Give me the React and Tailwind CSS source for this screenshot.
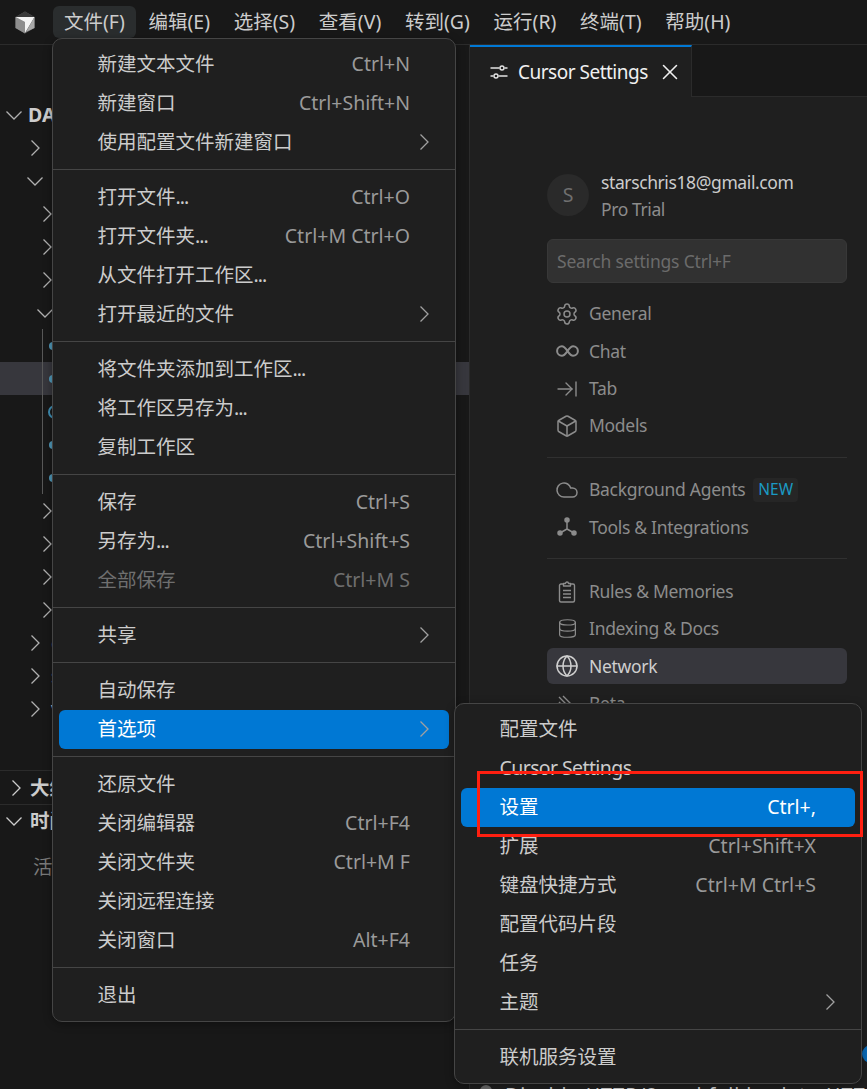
import React from "react";
import { Settings, ArrowRightToLine, Box, Cloud, Database, Globe, X } from "lucide-react";

const menuBar = ["文件(F)", "编辑(E)", "选择(S)", "查看(V)", "转到(G)", "运行(R)", "终端(T)", "帮助(H)"];

const fileMenu = [
    { label: "新建文本文件", keys: "Ctrl+N" },
    { label: "新建窗口", keys: "Ctrl+Shift+N" },
    { label: "使用配置文件新建窗口", more: true },
    { sep: true },
    { label: "打开文件...", keys: "Ctrl+O" },
    { label: "打开文件夹...", keys: "Ctrl+M Ctrl+O" },
    { label: "从文件打开工作区..." },
    { label: "打开最近的文件", more: true },
    { sep: true },
    { label: "将文件夹添加到工作区..." },
    { label: "将工作区另存为..." },
    { label: "复制工作区" },
    { sep: true },
    { label: "保存", keys: "Ctrl+S" },
    { label: "另存为...", keys: "Ctrl+Shift+S" },
    { label: "全部保存", keys: "Ctrl+M S", disabled: true },
    { sep: true },
    { label: "共享", more: true },
    { sep: true },
    { label: "自动保存" },
    { label: "首选项", more: true, active: true },
    { sep: true },
    { label: "还原文件" },
    { label: "关闭编辑器", keys: "Ctrl+F4" },
    { label: "关闭文件夹", keys: "Ctrl+M F" },
    { label: "关闭远程连接" },
    { label: "关闭窗口", keys: "Alt+F4" },
    { sep: true },
    { label: "退出" },
];

const prefsMenu = [
    { label: "配置文件" },
    { label: "Cursor Settings", latin: true },
    { label: "设置", keys: "Ctrl+,", active: true },
    { label: "扩展", keys: "Ctrl+Shift+X" },
    { label: "键盘快捷方式", keys: "Ctrl+M Ctrl+S" },
    { label: "配置代码片段" },
    { label: "任务" },
    { label: "主题", more: true },
    { sep: true },
    { label: "联机服务设置" },
];

function Chevron({ down, className = "" }) {
    return (
        <svg viewBox="0 0 16 16" className={`w-4 h-4 shrink-0 ${className}`} fill="none" stroke="currentColor" strokeWidth="1.3">
            <polyline points={down ? "0.5,4.5 8,12 15.5,4.5" : "4.5,0.5 12,8 4.5,15.5"} />
        </svg>
    );
}

function Logo() {
    return (
        <svg viewBox="0 0 20 23" className="w-5 h-[23px]">
            <polygon points="10,0.5 19.5,6 19.5,17 10,22.5 0.5,17 0.5,6" fill="#5c5c5c" />
            <polygon points="0.5,6 10,0.5 19.5,6 10,6" fill="#3a3a3a" />
            <polygon points="0.5,6 10,11 10,22.5 0.5,17" fill="#8e8e8e" />
            <polygon points="0.5,6 19.5,6 10,22 10,11" fill="#f4f4f4" />
            <polygon points="19.5,6 19.5,17 11,21" fill="#a8a8a8" />
        </svg>
    );
}

function SlidersIcon() {
    return (
        <svg viewBox="0 0 18 16" className="w-[18px] h-4" fill="none" stroke="#e4e4e4" strokeWidth="1.4">
            <path d="M0.5 4h9M14.5 4h3M0.5 12h3M8.5 12h9" />
            <circle cx="12" cy="4" r="2" />
            <circle cx="6" cy="12" r="2" />
        </svg>
    );
}

function LoopIcon() {
    return (
        <svg viewBox="0 0 23 14" className="w-[23px] h-[14px] shrink-0" fill="none" stroke="currentColor" strokeWidth="2">
            <path d="M11.5 7c-1.8-2.6-3.2-4.8-5.6-4.8a4.8 4.8 0 0 0 0 9.6c2.4 0 3.8-2.2 5.6-4.8s3.2-4.8 5.6-4.8a4.8 4.8 0 0 1 0 9.6c-2.4 0-3.8-2.2-5.6-4.8z" />
        </svg>
    );
}

function ToolsIcon() {
    return (
        <svg viewBox="0 0 20 20" className="w-5 h-5" fill="none" stroke="currentColor" strokeWidth="1.5">
            <path d="M10 4v8M10 12l-7 4M10 12l7 4" />
            <circle cx="10" cy="3" r="2" fill="currentColor" />
            <circle cx="3" cy="16" r="2" fill="currentColor" />
            <circle cx="17" cy="16" r="2" fill="currentColor" />
        </svg>
    );
}

function RulesIcon() {
    return (
        <svg viewBox="0 0 18 22" className="w-[18px] h-[22px]" fill="none" stroke="currentColor" strokeWidth="1.4" strokeLinejoin="round">
            <path d="M5.5 3H3a1.5 1.5 0 0 0-1.5 1.5v15A1.5 1.5 0 0 0 3 21h12a1.5 1.5 0 0 0 1.5-1.5v-15A1.5 1.5 0 0 0 15 3h-2.5" />
            <path d="M5.5 5V2.5h2a1.5 1.5 0 0 1 3 0h2V5z" />
            <path d="M5 9.5h8M5 13h8M5 16.5h8" />
        </svg>
    );
}

function BetaIcon() {
    return (
        <svg viewBox="0 0 20 20" className="w-5 h-5" fill="none" stroke="currentColor" strokeWidth="1.4">
            <path d="M2 3l13 13M6 2l12 12M2 8l9 9" />
        </svg>
    );
}

function MenuLabel({ text }) {
    if (!text.endsWith("...")) return <span>{text}</span>;
    return (
        <span>
            {text.slice(0, -3)}
            <span className="tracking-[-1px]">...</span>
        </span>
    );
}

function Menu({ items, className }) {
    return (
        <div className={`absolute z-20 bg-[#1f1f1f] border border-[#454545] rounded-[10px] py-[6px] shadow-[0_2px_8px_rgba(0,0,0,0.36)] ${className}`}>
            {items.map((item, i) =>
                item.sep ? (
                    <div key={i} className="h-4 pb-[2px] flex items-center">
                        <div className="w-full h-px bg-[#454545]" />
                    </div>
                ) : (
                    <div
                        key={i}
                        className={`h-[39px] mx-[6px] pl-[38.5px] pb-[2px] flex items-center rounded-[6px] ${item.more ? "pr-[17px]" : "pr-[39px]"} ${item.active ? "bg-[#0078d4] text-white" : item.disabled ? "text-[#6f6f6f]" : "text-[#cccccc]"} ${item.latin ? "tracking-[-0.6px]" : ""}`}
                    >
                        <MenuLabel text={item.label} />
                        {item.keys && (
                            <span className={`ml-auto ${item.active ? "text-white" : item.disabled ? "text-[#6f6f6f]" : "text-[#9a9a9a]"}`}>{item.keys}</span>
                        )}
                        {item.more && <Chevron className="ml-auto text-[#a0a0a0]" />}
                    </div>
                )
            )}
        </div>
    );
}

function TreeRow({ indent, down, text, bold }) {
    return (
        <div className={`h-[33px] flex items-center text-[#cccccc] whitespace-nowrap ${indent}`}>
            <Chevron down={down} className="text-[#b0b0b0]" />
            {text && <span className={bold ? "ml-[6px] font-bold" : "ml-[8px]"}>{text}</span>}
        </div>
    );
}

function FileRow({ selected, ring }) {
    return (
        <div className={`h-[33px] flex items-center pl-[49px] ${selected ? "bg-[#37373d]" : ""}`}>
            {ring ? (
                <div className="w-[14px] h-[14px] -ml-[1px] rounded-full border-2 border-[#3f8fb5]" />
            ) : (
                <div className="w-2 h-2 rounded-full bg-[#519aba]" />
            )}
        </div>
    );
}

function NavItem({ icon, label, active, badge }) {
    return (
        <div className={`h-9 flex items-center pl-[10px] rounded-[6px] whitespace-nowrap ${active ? "bg-[#37373d] text-[#cfcfcf]" : "text-[#8c8c8c]"}`}>
            <span className="w-5 h-5 flex items-center justify-center shrink-0">{icon}</span>
            <span className="ml-3">{label}</span>
            {badge && <span className="ml-2 px-[5px] h-6 flex items-center rounded-[4px] bg-[#262626] text-[#1b9ac4] text-[15.5px] tracking-normal">{badge}</span>}
        </div>
    );
}

function NavSep() {
    return (
        <div className="h-[25.5px] pb-[2px] flex items-center">
            <div className="w-full h-px bg-[#303030]" />
        </div>
    );
}

export default function App() {
    const big = { size: 24, strokeWidth: 1.5, className: "shrink-0" };

    return (
        <div className="relative w-[867px] h-[1089px] overflow-hidden bg-[#181818] text-[19.5px] leading-none font-['Noto_Sans','Noto_Sans_CJK_SC',sans-serif]">
            {/* title bar */}
            <div className="h-[45px] flex items-center pl-[15px] border-b border-[#2b2b2b]">
                <Logo />
                <div className="ml-[18px] flex items-center gap-[1.7px]">
                    {menuBar.map((m, i) => (
                        <div key={m} className={`h-8 px-[11px] flex items-center rounded-[6px] text-[#cccccc] whitespace-nowrap ${i === 0 ? "bg-[#2a2d2e]" : ""}`}>
                            {m}
                        </div>
                    ))}
                </div>
            </div>

            <div className="flex h-[1044px]">
                {/* explorer */}
                <div className="w-[469px] shrink-0 flex flex-col border-r border-[#2b2b2b] box-content">
                    <div className="pt-[53px]">
                        <TreeRow indent="pl-[6px]" down text="DATA" bold />
                        <TreeRow indent="pl-[27px]" text=".git" />
                        <TreeRow indent="pl-[27px]" down />
                        <TreeRow indent="pl-[39px]" />
                        <TreeRow indent="pl-[39px]" />
                        <TreeRow indent="pl-[39px]" />
                        <TreeRow indent="pl-[37px]" down />
                        <div className="relative">
                            <FileRow />
                            <FileRow selected />
                            <FileRow ring />
                            <FileRow />
                            <FileRow />
                            <div className="absolute left-[42px] top-0 bottom-0 w-px bg-[#585858]" />
                        </div>
                        <TreeRow indent="pl-[39px]" />
                        <TreeRow indent="pl-[39px]" />
                        <TreeRow indent="pl-[39px]" />
                        <TreeRow indent="pl-[39px]" />
                        <TreeRow indent="pl-[27px]" text="c" />
                        <TreeRow indent="pl-[27px]" text="s" />
                        <TreeRow indent="pl-[27px]" text="v" />
                    </div>
                    <div className="mt-[45px] h-[33px] border-t border-[#2b2b2b] box-content flex items-center pl-[8px] text-[#cccccc]">
                        <Chevron />
                        <span className="ml-[6px] font-bold">大纲</span>
                    </div>
                    <div className="h-[33px] border-t border-[#2b2b2b] flex items-center pl-[6px] text-[#cccccc]">
                        <Chevron down />
                        <span className="ml-[8px] font-bold">时间线</span>
                    </div>
                    <div className="pl-[33px] pt-5 text-[#7a7a7a]">活动编辑器未提供时间线信息。</div>
                </div>

                {/* editor */}
                <div className="relative flex-1 bg-[#1f1f1f]">
                    <div className="h-[52px] flex bg-[#181818]">
                        <div className="w-[222px] h-[52px] border-t-2 border-t-[#0078d4] border-r border-r-[#2b2b2b] bg-[#1f1f1f] flex items-center pl-5 text-[#f0f0f0]">
                            <SlidersIcon />
                            <span className="ml-[10px] text-[19px] tracking-[-0.5px]">Cursor Settings</span>
                            <X size={26} strokeWidth={1.4} className="ml-[9px] shrink-0 text-[#f0f0f0]" />
                        </div>
                        <div className="flex-1 border-b border-[#2b2b2b]" />
                    </div>

                    <div className="w-[300px] ml-[77px] pt-[77px]">
                        <div className="flex items-center h-[42px]">
                            <div className="w-[42px] h-[42px] rounded-full bg-[#2a2a2a] text-[#6f6f6f] flex items-center justify-center">S</div>
                            <div className="ml-3 pt-[2px] flex flex-col gap-[10px] text-[17.5px] tracking-[-0.4px]">
                                <span className="text-[#cccccc]">starschris18@gmail.com</span>
                                <span className="text-[#8c8c8c]">Pro Trial</span>
                            </div>
                        </div>
                        <div className="mt-[23px] h-11 pt-[2px] rounded-[6px] bg-[#313131] border border-[#383838] flex items-center pl-[9px] text-[17.5px] tracking-[-0.2px] text-[#6b6b6b]">
                            Search settings Ctrl+F
                        </div>
                        <div className="mt-[13px] flex flex-col gap-[1.33px] text-[17.5px] tracking-[-0.3px]">
                            <NavItem icon={<Settings {...big} />} label="General" />
                            <NavItem icon={<LoopIcon />} label="Chat" />
                            <NavItem icon={<ArrowRightToLine size={24} strokeWidth={1.4} className="shrink-0" />} label="Tab" />
                            <NavItem icon={<Box {...big} />} label="Models" />
                            <NavSep />
                            <NavItem icon={<Cloud {...big} />} label="Background Agents" badge="NEW" />
                            <NavItem icon={<ToolsIcon />} label="Tools & Integrations" />
                            <NavSep />
                            <NavItem icon={<RulesIcon />} label="Rules & Memories" />
                            <NavItem icon={<Database size={21} strokeWidth={1.4} className="shrink-0" />} label="Indexing & Docs" />
                            <NavItem icon={<Globe {...big} />} label="Network" active />
                            <NavItem icon={<BetaIcon />} label="Beta" />
                        </div>
                    </div>

                    {/* bits of the settings page peeking out round the submenu */}
                    <div className="absolute left-[10px] top-[1040px] w-3 h-3 rounded-full bg-[#6a6a6a]" />
                    <div className="absolute left-[35px] top-[1040px] text-[#cccccc] whitespace-nowrap tracking-[1px]">Disable HTTP/2 and fall back to HTTP/1.1</div>
                    <div className="absolute left-[392px] top-[1000px] w-[14px] h-[18px] rounded-l-full bg-[#0a6cba]" />
                </div>
            </div>

            <Menu items={fileMenu} className="left-[52px] top-[38px] w-[404px]" />
            <Menu items={prefsMenu} className="left-[454px] top-[703px] w-[408px]" />

            {/* red annotation box */}
            <div className="absolute z-30 left-[477px] top-[771px] w-[386px] h-[66px] border-[3px] border-[#ff1f10]" />
        </div>
    );
}
